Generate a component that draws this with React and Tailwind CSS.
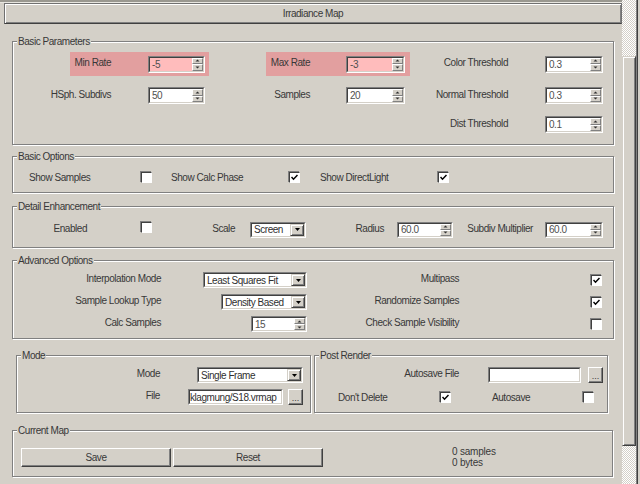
import React from "react";

const BG = "bg-[#d4d0c8]";

function Group({ title, className = "", children }) {
  return (
    <div
      className={`border border-[#808080] shadow-[inset_1px_1px_0_#fff,1px_1px_0_#fff] ${className}`}
    >
      <div className="-mt-[7px] ml-[4px] h-[13px] w-fit bg-[#d4d0c8] px-[1px] leading-[13px]">
        {title}
      </div>
      {children}
    </div>
  );
}

function SpinArrow({ up }) {
  return (
    <svg width="5" height="3" viewBox="0 0 5 3" className="block">
      {up ? (
        <polygon points="2.5,0.5 4.5,2.5 0.5,2.5" fill="#303030" />
      ) : (
        <polygon points="0.5,0.5 4.5,0.5 2.5,2.5" fill="#303030" />
      )}
    </svg>
  );
}

function Sunken({ className = "", inner = "bg-white", children }) {
  return (
    <div
      className={`flex border border-t-[#808080] border-l-[#808080] border-b-white border-r-white ${className}`}
    >
      <div
        className={`flex min-w-0 flex-1 border border-t-[#404040] border-l-[#404040] border-b-[#d4d0c8] border-r-[#d4d0c8] ${inner}`}
      >
        {children}
      </div>
    </div>
  );
}

function Spinner({ w, value, pink = false, h = "h-[17px]" }) {
  return (
    <Sunken className={`${w} ${h}`} inner={pink ? "bg-[#ffbcbc]" : "bg-white"}>
      <div className="flex flex-1 items-center overflow-hidden pl-[2px] text-[#505050]">
        {value}
      </div>
      <div className="flex w-[11px] flex-col bg-[#d4d0c8]">
        <div className="flex flex-1 items-center justify-center border border-t-white border-l-white border-b-[#808080] border-r-[#808080]">
          <SpinArrow up />
        </div>
        <div className="flex flex-1 items-center justify-center border border-t-white border-l-white border-b-[#808080] border-r-[#808080]">
          <SpinArrow />
        </div>
      </div>
    </Sunken>
  );
}

function Select({ w, value }) {
  return (
    <Sunken className={`${w} h-[16px]`}>
      <div className="flex flex-1 items-center overflow-hidden whitespace-nowrap pl-[2px] text-[#303030]">
        {value}
      </div>
      <div className="flex w-[14px] items-center justify-center border border-t-[#d4d0c8] border-l-[#d4d0c8] border-b-[#404040] border-r-[#404040] bg-[#d4d0c8] shadow-[inset_1px_1px_0_#fff,inset_-1px_-1px_0_#808080]">
        <svg width="5" height="3" viewBox="0 0 5 3" className="block">
          <polygon points="0,0 5,0 2.5,3" fill="#000" />
        </svg>
      </div>
    </Sunken>
  );
}

function TextField({ w, value = "" }) {
  return (
    <Sunken className={`${w} h-[16px]`}>
      <div className="flex flex-1 items-center overflow-hidden whitespace-nowrap text-[#303030]">
        {value}
      </div>
    </Sunken>
  );
}

function DotsButton() {
  return (
    <div className="flex h-[16px] w-[15px] items-end justify-center border border-t-white border-l-white border-b-[#404040] border-r-[#404040] bg-[#d4d0c8] pb-[3px] shadow-[inset_-1px_-1px_0_#808080] text-[9px] leading-[6px] tracking-[0px]">
      ...
    </div>
  );
}

function Check({ checked = false }) {
  return (
    <div className="flex h-[11px] w-[11px] shrink-0 items-center justify-center border border-t-[#404040] border-l-[#404040] border-b-white border-r-white bg-white shadow-[-1px_-1px_0_#808080]">
      {checked && (
        <svg width="7" height="7" viewBox="0 0 7 7" className="block">
          <polyline
            points="0.5,3 2.5,5.2 6.5,1"
            fill="none"
            stroke="#000"
            strokeWidth="1.5"
          />
        </svg>
      )}
    </div>
  );
}

function RaisedButton({ w, label }) {
  return (
    <div
      className={`flex h-[19px] ${w} items-center justify-center border border-t-white border-l-white border-b-[#404040] border-r-[#404040] bg-[#d4d0c8] shadow-[inset_-1px_-1px_0_#808080]`}
    >
      {label}
    </div>
  );
}

function Label({ w, children, right = true, up = true }) {
  return (
    <div
      className={`${w} shrink-0 whitespace-nowrap ${right ? "text-right" : "text-left"} ${up ? "pb-[3px]" : ""}`}
    >
      {children}
    </div>
  );
}

export default function App() {
  return (
    <div
      className={`flex h-[484px] w-[640px] overflow-hidden ${BG} font-['Liberation_Sans',Arial,sans-serif] text-[10px] leading-[13px] tracking-[-0.45px] text-[#383838]`}
    >
      {/* main column */}
      <div className="flex w-[622px] shrink-0 flex-col">
        <div className="h-[2px] bg-[#9a9890]" />
        <div className="h-[1px] bg-[#e8e6e0]" />
        {/* rollout header */}
        <div className="ml-[4px] flex h-[21px] w-[618px] items-center justify-center border border-[#707070] border-b-[#404040] bg-[#d4d0c8] shadow-[inset_1px_1px_0_#fff,inset_-1px_-1px_0_#808080]">
          Irradiance Map
        </div>

        <div className="ml-[12px] flex w-[602px] flex-col">
          {/* Basic Parameters */}
          <Group title="Basic Parameters" className="mt-[17px] h-[104px]">
            <div className="mt-[4px] flex h-[24px] items-center">
              <div className="w-[57px] shrink-0" />
              <div className="flex h-[24px] w-[139px] shrink-0 items-center bg-[#e29f9f]">
                <Label w="w-[41px]">Min Rate</Label>
                <div className="ml-[37px]">
                  <Spinner w="w-[57px]" value="-5" pink />
                </div>
              </div>
              <div className="w-[57px] shrink-0" />
              <div className="flex h-[24px] w-[144px] shrink-0 items-center bg-[#e29f9f]">
                <Label w="w-[44px]">Max Rate</Label>
                <div className="ml-[36px]">
                  <Spinner w="w-[59px]" value="-3" pink />
                </div>
              </div>
              <Label w="w-[98px]">Color Threshold</Label>
              <div className="ml-[37px]">
                <Spinner w="w-[58px]" value="0.3" />
              </div>
            </div>
            <div className="mt-[11px] flex h-[17px] items-center">
              <Label w="w-[98px]">HSph. Subdivs</Label>
              <div className="ml-[37px]">
                <Spinner w="w-[57px]" value="50" />
              </div>
              <Label w="w-[105px]">Samples</Label>
              <div className="ml-[36px]">
                <Spinner w="w-[59px]" value="20" />
              </div>
              <Label w="w-[103px]">Normal Threshold</Label>
              <div className="ml-[37px]">
                <Spinner w="w-[58px]" value="0.3" />
              </div>
            </div>
            <div className="mt-[12px] flex h-[17px] items-center">
              <div className="w-[392px] shrink-0" />
              <Label w="w-[103px]">Dist Threshold</Label>
              <div className="ml-[37px]">
                <Spinner w="w-[58px]" value="0.1" />
              </div>
            </div>
          </Group>

          {/* Basic Options */}
          <Group title="Basic Options" className="mt-[11px] h-[37px]">
            <div className="mt-[8px] flex h-[13px] items-center pl-[16px]">
              <Label w="w-[112px]" right={false} up={false}>
                Show Samples
              </Label>
              <Check />
              <div className="w-[19px] shrink-0" />
              <Label w="w-[118px]" right={false} up={false}>
                Show Calc Phase
              </Label>
              <Check checked />
              <div className="w-[20px] shrink-0" />
              <Label w="w-[118px]" right={false} up={false}>
                Show DirectLight
              </Label>
              <Check checked />
            </div>
          </Group>

          {/* Detail Enhancement */}
          <Group title="Detail Enhancement" className="mt-[13px] h-[42px]">
            <div className="mt-[8px] flex h-[17px] items-center">
              <Label w="w-[74px]">Enabled</Label>
              <div className="ml-[54px] -mt-[4px]">
                <Check />
              </div>
              <Label w="w-[83px]">Scale</Label>
              <div className="ml-[15px]">
                <Select w="w-[56px]" value="Screen" />
              </div>
              <Label w="w-[78px]">Radius</Label>
              <div className="ml-[13px]">
                <Spinner w="w-[56px]" value="60.0" h="h-[16px]" />
              </div>
              <Label w="w-[80px]">Subdiv Multiplier</Label>
              <div className="ml-[12px]">
                <Spinner w="w-[58px]" value="60.0" h="h-[16px]" />
              </div>
            </div>
          </Group>

          {/* Advanced Options */}
          <Group title="Advanced Options" className="mt-[12px] h-[79px]">
            <div className="mt-[5px] flex h-[16px] items-center">
              <Label w="w-[148px]">Interpolation Mode</Label>
              <div className="flex w-[146px] shrink-0 justify-end">
                <Select w="w-[104px]" value="Least Squares Fit" />
              </div>
              <Label w="w-[152px]">Multipass</Label>
              <div className="flex w-[143px] shrink-0 justify-end">
                <Check checked />
              </div>
            </div>
            <div className="mt-[6px] flex h-[16px] items-center">
              <Label w="w-[148px]">Sample Lookup Type</Label>
              <div className="flex w-[146px] shrink-0 justify-end">
                <Select w="w-[86px]" value="Density Based" />
              </div>
              <Label w="w-[152px]">Randomize Samples</Label>
              <div className="flex w-[143px] shrink-0 justify-end">
                <Check checked />
              </div>
            </div>
            <div className="mt-[6px] flex h-[16px] items-center">
              <Label w="w-[148px]">Calc Samples</Label>
              <div className="flex w-[146px] shrink-0 justify-end">
                <Spinner w="w-[56px]" value="15" h="h-[16px]" />
              </div>
              <Label w="w-[152px]">Check Sample Visibility</Label>
              <div className="flex w-[143px] shrink-0 justify-end">
                <Check />
              </div>
            </div>
          </Group>

          {/* Mode / Post Render */}
          <div className="mt-[16px] flex">
            <Group title="Mode" className="ml-[4px] h-[58px] w-[295px]">
              <div className="mt-[5px] flex h-[16px] items-center">
                <Label w="w-[143px]">Mode</Label>
                <div className="ml-[37px]">
                  <Select w="w-[106px]" value="Single Frame" />
                </div>
              </div>
              <div className="mt-[6px] flex h-[16px] items-center">
                <Label w="w-[143px]">File</Label>
                <div className="ml-[28px]">
                  <TextField w="w-[95px]" value="klagmung/S18.vrmap" />
                </div>
                <div className="ml-[5px]">
                  <DotsButton />
                </div>
              </div>
            </Group>
            <Group title="Post Render" className="ml-[3px] h-[58px] w-[294px]">
              <div className="mt-[5px] flex h-[16px] items-center">
                <Label w="w-[144px]">Autosave File</Label>
                <div className="ml-[29px]">
                  <TextField w="w-[93px]" />
                </div>
                <div className="ml-[7px]">
                  <DotsButton />
                </div>
              </div>
              <div className="mt-[6px] flex h-[16px] items-center pl-[23px]">
                <Label w="w-[102px]" right={false} up={false}>
                  Don't Delete
                </Label>
                <Check checked />
                <div className="w-[41px] shrink-0" />
                <Label w="w-[91px]" right={false} up={false}>
                  Autosave
                </Label>
                <Check />
              </div>
            </Group>
          </div>

          {/* Current Map */}
          <Group title="Current Map" className="mt-[17px] h-[47px] w-[601px]">
            <div className="mt-[9px] flex items-center pl-[8px]">
              <RaisedButton w="w-[150px]" label="Save" />
              <div className="ml-[2px]">
                <RaisedButton w="w-[150px]" label="Reset" />
              </div>
              <div className="ml-[129px] flex flex-col leading-[11px] tracking-[-0.2px]">
                <span>0 samples</span>
                <span>0 bytes</span>
              </div>
            </div>
          </Group>
        </div>
      </div>

      {/* scrollbar */}
      <div className="flex w-[18px] shrink-0">
        <div className="flex w-[14px] flex-col bg-[repeating-conic-gradient(#ffffff_0_25%,#d4d0c8_0_50%)] bg-[length:2px_2px]">
          <div className="h-[56px] shrink-0" />
          <div className="flex-1 border border-t-[#d4d0c8] border-l-[#d4d0c8] border-b-[#404040] border-r-[#404040] bg-[#d4d0c8] shadow-[inset_1px_1px_0_#fff,inset_-1px_-1px_0_#808080]" />
          <div className="h-[38px] shrink-0" />
        </div>
        <div className="w-[1px] bg-[#808080]" />
        <div className="w-[1px] bg-[#404040]" />
        <div className="w-[2px] bg-[#d4d0c8]" />
      </div>
    </div>
  );
}
